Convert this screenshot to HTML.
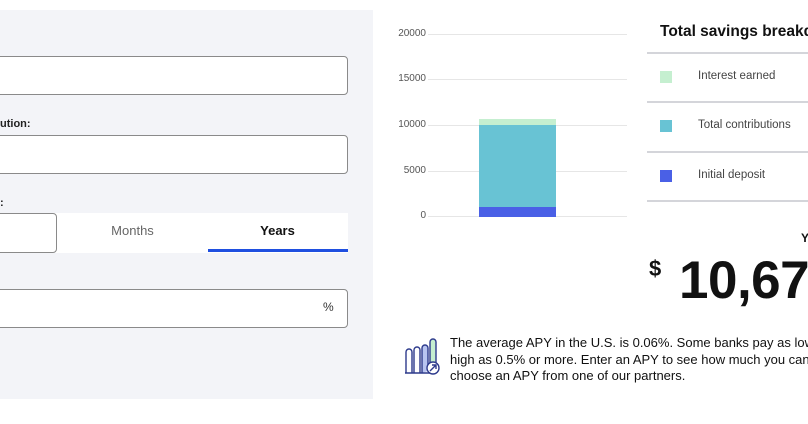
<!DOCTYPE html>
<html><head><style>
*{margin:0;padding:0;box-sizing:border-box}
html,body{width:808px;height:424px;overflow:hidden}
body{background:#fff;position:relative;font-family:"Liberation Sans",sans-serif;color:#111}
.a{position:absolute}
.clip{position:absolute;left:0;top:0;width:808px;height:424px;overflow:hidden}
.panel{left:0;top:10px;width:373px;height:389px;background:#f3f4f8}
.box{background:#fff;border:1.5px solid #8a8a8a;border-radius:4px}
.lbl{font-size:11px;font-weight:bold;color:#222}
.yl{font-size:10px;color:#555;width:40px;text-align:right;left:386px}
.gl{left:428px;width:199px;height:1px;background:#e6e6e6}
.hl{left:647px;width:161px;height:1.5px;background:#d4d5da}
.sq{left:660px;width:12px;height:12px}
.lt{left:698px;font-size:11.5px;color:#444}
.info{left:450px;top:335px;width:358px;overflow:hidden;font-size:13px;line-height:16.5px;color:#111;white-space:nowrap}
</style></head><body><div class="clip">
<div class="a panel"></div>
<div class="a box" style="left:-5px;top:56px;width:353px;height:39px"></div>
<div class="a lbl" style="left:0;top:118px">ution:</div>
<div class="a box" style="left:-5px;top:135px;width:353px;height:39px"></div>
<div class="a lbl" style="left:0;top:197px">:</div>
<div class="a" style="left:0;top:213px;width:348px;height:40px;background:#fff"></div>
<div class="a box" style="left:-5px;top:213px;width:62px;height:40px"></div>
<div class="a" style="left:95px;top:223px;width:75px;text-align:center;font-size:13px;color:#666">Months</div>
<div class="a" style="left:240px;top:223px;width:75px;text-align:center;font-size:13px;font-weight:bold;color:#111">Years</div>
<div class="a" style="left:208px;top:249px;width:140px;height:3px;background:#1f4fe0"></div>
<div class="a box" style="left:-5px;top:289px;width:353px;height:39px"></div>
<div class="a" style="left:323px;top:300px;font-size:12px;color:#333">%</div>

<div class="a yl" style="top:28px">20000</div>
<div class="a yl" style="top:73px">15000</div>
<div class="a yl" style="top:119px">10000</div>
<div class="a yl" style="top:165px">5000</div>
<div class="a yl" style="top:210px">0</div>
<div class="a gl" style="top:34px"></div>
<div class="a gl" style="top:79px"></div>
<div class="a gl" style="top:125px"></div>
<div class="a gl" style="top:171px"></div>
<div class="a gl" style="top:216px"></div>
<div class="a" style="left:479px;top:119px;width:77px;height:6px;background:#c5efd0"></div>
<div class="a" style="left:479px;top:125px;width:77px;height:82px;background:#68c3d4"></div>
<div class="a" style="left:479px;top:207px;width:77px;height:10px;background:#4a60e6"></div>

<div class="a" style="left:660px;top:23px;width:148px;overflow:hidden;font-size:15.5px;font-weight:bold;white-space:nowrap">Total savings breakdown</div>
<div class="a hl" style="top:52px"></div>
<div class="a hl" style="top:101px"></div>
<div class="a hl" style="top:151px"></div>
<div class="a hl" style="top:200px"></div>
<div class="a sq" style="top:71px;background:#c5efd0"></div>
<div class="a sq" style="top:120px;background:#68c3d4"></div>
<div class="a sq" style="top:170px;background:#4a60e6"></div>
<div class="a lt" style="top:70px">Interest earned</div>
<div class="a lt" style="top:119px">Total contributions</div>
<div class="a lt" style="top:169px">Initial deposit</div>

<div class="a" style="left:801px;top:231px;width:7px;overflow:hidden;font-size:12px;font-weight:bold">Y</div>
<div class="a" style="left:649px;top:256px;font-size:22px;font-weight:bold">$</div>
<div class="a" style="left:679px;top:253px;width:129px;overflow:hidden;font-size:53px;font-weight:bold;letter-spacing:-0.5px;line-height:56px;white-space:nowrap">10,67</div>

<svg class="a" style="left:404px;top:337px" width="40" height="40" viewBox="0 0 40 40">
<g fill="none" stroke-width="1.4">
<path d="M2 36V15a3 3 0 0 1 6 0v21" stroke="#2d3a8c"/>
<path d="M10 36V13a3 3 0 0 1 6 0v23" stroke="#2d3a8c"/>
<path d="M18 36V11a3 3 0 0 1 6 0v23" stroke="#2d3a8c" fill="#b8c4f0"/>
<path d="M26 30V5a3 3 0 0 1 6 0v21" stroke="#2d3a8c" fill="#c5efd0"/>
<path d="M1 36H26" stroke="#2d3a8c"/>
<circle cx="29" cy="31" r="6" stroke="#2d3a8c" fill="#fff"/>
<path d="M26 34l6-6M28 28h4v4" stroke="#2d3a8c"/>
</g></svg>
<div class="a info">The average APY in the U.S. is 0.06%. Some banks pay as low<br>high as 0.5% or more. Enter an APY to see how much you can<br>choose an APY from one of our partners.</div>
</div></body></html>
